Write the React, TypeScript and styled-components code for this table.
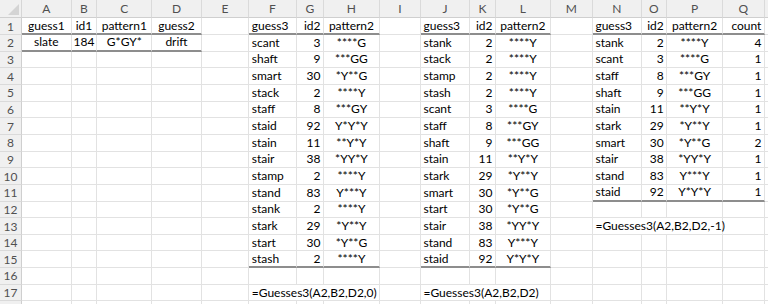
import React from "react";
import styled, { createGlobalStyle } from "styled-components";

const GlobalStyle = createGlobalStyle`
  html, body { margin: 0; padding: 0; background: #ffffff; overflow: hidden; }
  #root { width: 768px; height: 304px; overflow: hidden; }
`;

const COLS = [49.7, 25.6, 55, 49.4, 47.6, 47.4, 27.3, 56, 41, 49, 26, 54.7, 42.3, 48.7, 25.6, 55.7, 42, 60];
const LETTERS = "ABCDEFGHIJKLMNOPQ".split("");
const ROWS = 17;

type Align = "left" | "center" | "right";
type Spec = { text: string; align: Align; rule?: boolean; span?: number };

const Sheet = styled.div`
  display: grid;
  grid-template-columns: 22px ${COLS.map((c) => `${c}px`).join(" ")};
  grid-template-rows: 18.3px repeat(${ROWS + 1}, 16.67px);
  font-family: Lato, "Open Sans", sans-serif;
  font-size: 12px;
  color: #000;
  width: max-content;
`;

const Corner = styled.div`
  background: #f0f0f0;
  border-right: 1px solid #d6d6d6;
  border-bottom: 1px solid #cfcfcf;
  box-sizing: border-box;
  display: flex;
  align-items: flex-end;
  justify-content: flex-end;
  padding: 0 2px 2px 0;
`;

const Triangle = styled.div`
  width: 0;
  height: 0;
  border-left: 11px solid transparent;
  border-bottom: 11px solid #d4d4d4;
`;

const ColHead = styled.div`
  background: #f0f0f0;
  border-right: 1px solid #dadada;
  border-bottom: 1px solid #cfcfcf;
  box-sizing: border-box;
  display: flex;
  align-items: center;
  justify-content: center;
  color: #505050;
  font-size: 12px;
`;

const RowHead = styled.div`
  background: #f0f0f0;
  border-right: 1px solid #cfcfcf;
  border-bottom: 1px solid #dadada;
  box-sizing: border-box;
  display: flex;
  align-items: center;
  justify-content: center;
  color: #505050;
`;

const Cell = styled.div<{ $align: Align; $rule?: boolean; $span?: number }>`
  box-sizing: border-box;
  border-right: 1px solid #e2e2e2;
  border-bottom: ${(p) => (p.$rule ? "2px solid #8d8d8d" : "1px solid #e2e2e2")};
  display: flex;
  align-items: center;
  justify-content: ${(p) => (p.$align === "left" ? "flex-start" : p.$align === "right" ? "flex-end" : "center")};
  padding: 0 2.5px;
  white-space: nowrap;
  overflow: visible;
  grid-column: span ${(p) => p.$span ?? 1};
  line-height: 1;
`;

const grid: Record<string, Spec> = {};
const put = (r: number, c: number, s: Spec) => {
  grid[`${r}-${c}`] = s;
};

// A-D block
[
  ["guess1", "id1", "pattern1", "guess2"],
  ["slate", "184", "G*GY*", "drift"],
].forEach((row, i) => row.forEach((t, j) => put(i + 1, j, { text: t, align: "center", rule: true })));

const block = (startCol: number, header: string[], rows: string[][], aligns: Align[]) => {
  const all = [header, ...rows];
  all.forEach((row, i) =>
    row.forEach((t, j) =>
      put(i + 1, startCol + j, { text: t, align: aligns[j], rule: i === 0 || i === all.length - 1 })
    )
  );
};

const F = [
  ["scant", "3", "****G"],
  ["shaft", "9", "***GG"],
  ["smart", "30", "*Y**G"],
  ["stack", "2", "****Y"],
  ["staff", "8", "***GY"],
  ["staid", "92", "Y*Y*Y"],
  ["stain", "11", "**Y*Y"],
  ["stair", "38", "*YY*Y"],
  ["stamp", "2", "****Y"],
  ["stand", "83", "Y***Y"],
  ["stank", "2", "****Y"],
  ["stark", "29", "*Y**Y"],
  ["start", "30", "*Y**G"],
  ["stash", "2", "****Y"],
];
const J = [
  ["stank", "2", "****Y"],
  ["stack", "2", "****Y"],
  ["stamp", "2", "****Y"],
  ["stash", "2", "****Y"],
  ["scant", "3", "****G"],
  ["staff", "8", "***GY"],
  ["shaft", "9", "***GG"],
  ["stain", "11", "**Y*Y"],
  ["stark", "29", "*Y**Y"],
  ["smart", "30", "*Y**G"],
  ["start", "30", "*Y**G"],
  ["stair", "38", "*YY*Y"],
  ["stand", "83", "Y***Y"],
  ["staid", "92", "Y*Y*Y"],
];
const N = [
  ["stank", "2", "****Y", "4"],
  ["scant", "3", "****G", "1"],
  ["staff", "8", "***GY", "1"],
  ["shaft", "9", "***GG", "1"],
  ["stain", "11", "**Y*Y", "1"],
  ["stark", "29", "*Y**Y", "1"],
  ["smart", "30", "*Y**G", "2"],
  ["stair", "38", "*YY*Y", "1"],
  ["stand", "83", "Y***Y", "1"],
  ["staid", "92", "Y*Y*Y", "1"],
];

block(5, ["guess3", "id2", "pattern2"], F, ["left", "right", "center"]);
block(9, ["guess3", "id2", "pattern2"], J, ["left", "right", "center"]);
block(13, ["guess3", "id2", "pattern2", "count"], N, ["left", "right", "center", "right"]);

put(17, 5, { text: "=Guesses3(A2,B2,D2,0)", align: "left", span: 3 });
put(17, 9, { text: "=Guesses3(A2,B2,D2)", align: "left", span: 3 });
put(13, 13, { text: "=Guesses3(A2,B2,D2,-1)", align: "left", span: 3 });

export default function App() {
  const body: React.ReactNode[] = [];
  for (let r = 1; r <= ROWS + 1; r++) {
    body.push(<RowHead key={`rh${r}`}>{r <= ROWS ? r : ""}</RowHead>);
    let c = 0;
    while (c < COLS.length) {
      const s = grid[`${r}-${c}`];
      if (s) {
        body.push(
          <Cell key={`${r}-${c}`} $align={s.align} $rule={s.rule} $span={s.span}>
            {s.text}
          </Cell>
        );
        c += s.span ?? 1;
      } else {
        body.push(<Cell key={`${r}-${c}`} $align="left" />);
        c += 1;
      }
    }
  }
  return (
    <>
      <GlobalStyle />
      <Sheet>
        <Corner>
          <Triangle />
        </Corner>
        {LETTERS.map((l) => (
          <ColHead key={l}>{l}</ColHead>
        ))}
        <ColHead />
        {body}
      </Sheet>
    </>
  );
}
